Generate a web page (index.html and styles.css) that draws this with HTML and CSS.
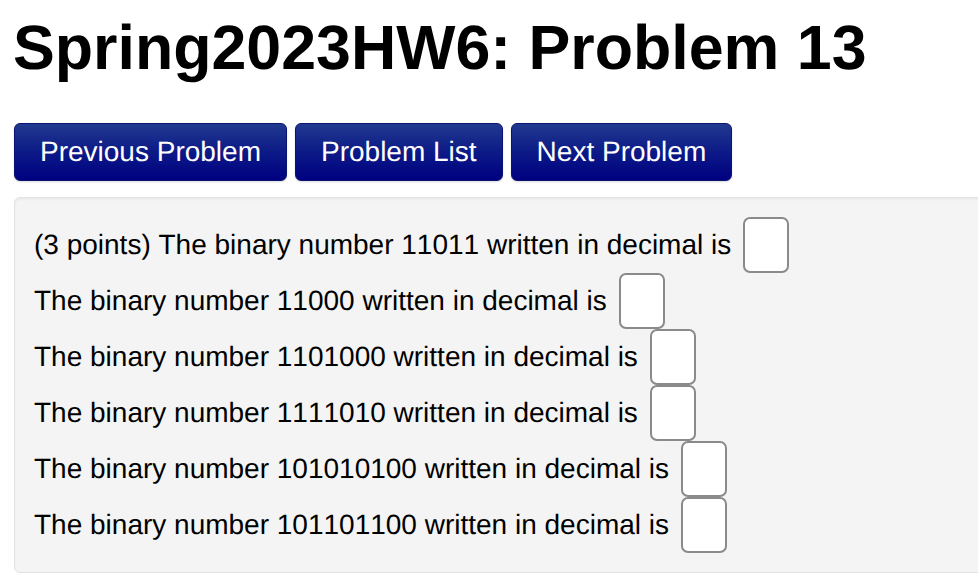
FILE: index.html
```html
<!DOCTYPE html>
<html lang="en">
<head>
<meta charset="utf-8">
<title>Spring2023HW6: Problem 13</title>
<link rel="stylesheet" href="styles.css">
</head>
<body>
  <h1 class="page-title">Spring2023HW6: Problem 13</h1>
  <nav class="problem-nav">
    <a class="nav-btn" href="#">Previous Problem</a>
    <a class="nav-btn" href="#">Problem List</a>
    <a class="nav-btn" href="#">Next Problem</a>
  </nav>
  <div class="problem-panel">
    <div class="problem-row"><span>(3 points) The binary number 11011 written in decimal is</span><input class="answer" type="text" aria-label="answer 1"></div>
    <div class="problem-row"><span>The binary number 11000 written in decimal is</span><input class="answer" type="text" aria-label="answer 2"></div>
    <div class="problem-row"><span>The binary number 1101000 written in decimal is</span><input class="answer" type="text" aria-label="answer 3"></div>
    <div class="problem-row"><span>The binary number 1111010 written in decimal is</span><input class="answer" type="text" aria-label="answer 4"></div>
    <div class="problem-row"><span>The binary number 101010100 written in decimal is</span><input class="answer" type="text" aria-label="answer 5"></div>
    <div class="problem-row"><span>The binary number 101101100 written in decimal is</span><input class="answer" type="text" aria-label="answer 6"></div>
  </div>
</body>
</html>
```

FILE: styles.css
```css
html, body {
  margin: 0;
  padding: 0;
  overflow: hidden;
  background: #ffffff;
}

body {
  font-family: "Liberation Sans", Arial, Helvetica, sans-serif;
  color: #000;
  padding: 0 0 0 14px;
  text-rendering: geometricPrecision;
}

.page-title {
  margin: 17px 0 0 -1px;
  font-size: 62.7px;
  line-height: 63px;
  font-weight: 700;
}

.problem-nav {
  display: flex;
  gap: 8px;
  margin-top: 43px;
}

.nav-btn {
  display: flex;
  align-items: center;
  height: 56px;
  padding: 0 25px;
  border: 1px solid #0a1470;
  border-radius: 6px;
  background: linear-gradient(to bottom, #21398f 0%, #0c1a87 50%, #000080 100%);
  color: #ffffff;
  font-size: 28px;
  text-decoration: none;
  box-shadow: 0 1px 2px rgba(0, 0, 0, 0.15);
}

.problem-panel {
  margin-top: 16px;
  width: 1000px;
  padding: 19px 20px 19px 19px;
  background: #f4f4f4;
  border: 1px solid #e2e2e2;
  border-radius: 6px;
  box-shadow: inset 0 2px 2px rgba(0, 0, 0, 0.04);
}

.problem-row {
  display: flex;
  align-items: center;
  height: 56px;
  font-size: 28px;
  font-kerning: none;
}

.answer {
  box-sizing: border-box;
  width: 46px;
  height: 56px;
  margin: 0 0 0 12px;
  padding: 0;
  border: 2px solid #8a8a8a;
  border-radius: 7px;
  background: #ffffff;
}
```
